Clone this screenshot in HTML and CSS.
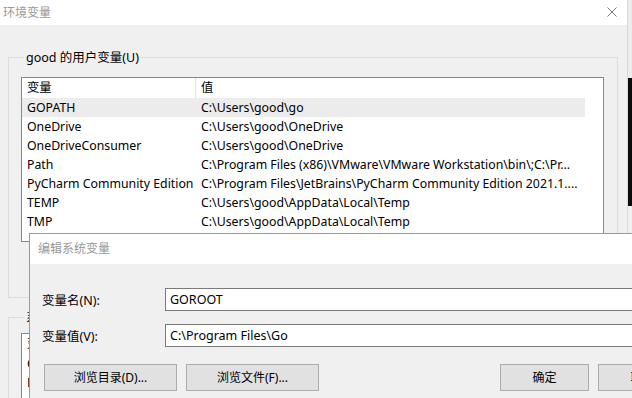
FILE: index.html
```html
<!DOCTYPE html>
<html>
<head>
    <meta charset="utf-8"/>
    <link rel="stylesheet" href="styles.css">
</head>
<body>
<div class="screen">
    <div class="window">
        <div class="titlebar">
            <span class="title">环境变量</span>
            <svg class="close" width="10" height="10" viewBox="0 0 10 10">
                <path d="M0.5 0.5 L9.5 9.5 M9.5 0.5 L0.5 9.5" stroke="#777" stroke-width="1" fill="none"/>
            </svg>
        </div>
        <div class="content">
            <fieldset class="group user">
                <legend>good 的用户变量(U)</legend>
                <div class="list">
                    <div class="list-head">
                        <span class="col name">变量</span>
                        <span class="col value">值</span>
                    </div>
                    <div class="row selected"><span class="col name">GOPATH</span><span class="col value">C:\Users\good\go</span></div>
                    <div class="row"><span class="col name">OneDrive</span><span class="col value">C:\Users\good\OneDrive</span></div>
                    <div class="row"><span class="col name">OneDriveConsumer</span><span class="col value">C:\Users\good\OneDrive</span></div>
                    <div class="row"><span class="col name">Path</span><span class="col value">C:\Program Files (x86)\VMware\VMware Workstation\bin\;C:\Pr...</span></div>
                    <div class="row"><span class="col name">PyCharm Community Edition</span><span class="col value">C:\Program Files\JetBrains\PyCharm Community Edition 2021.1....</span></div>
                    <div class="row"><span class="col name">TEMP</span><span class="col value">C:\Users\good\AppData\Local\Temp</span></div>
                    <div class="row"><span class="col name">TMP</span><span class="col value">C:\Users\good\AppData\Local\Temp</span></div>
                </div>
            </fieldset>
            <fieldset class="group system">
                <legend>系统变量(S)</legend>
                <div class="list">
                    <div class="list-head">
                        <span class="col name">变量</span>
                    </div>
                    <div class="row"><span class="col name">ComSpec</span></div>
                    <div class="row"><span class="col name">DriverData</span></div>
                </div>
            </fieldset>
        </div>
    </div>
    <div class="desk">
        <div class="desk-top"></div>
        <div class="desk-term"></div>
    </div>

    <div class="dialog">
        <div class="dialog-title">编辑系统变量</div>
        <div class="dialog-body">
            <div class="field">
                <label>变量名(N):</label>
                <div class="input">GOROOT</div>
            </div>
            <div class="field">
                <label>变量值(V):</label>
                <div class="input">C:\Program Files\Go</div>
            </div>
            <div class="buttons">
                <div class="btn wide">浏览目录(D)...</div>
                <div class="btn wide">浏览文件(F)...</div>
                <div class="spacer"></div>
                <div class="btn">确定</div>
                <div class="btn">取消</div>
            </div>
        </div>
    </div>
</div>
</body>
</html>
```

FILE: styles.css
```css
body {
    margin: 0;
    font-family: 'Noto Sans', 'Noto Sans CJK SC', sans-serif;
    font-size: 12.3px;
    color: #000;
}

.screen {
    position: relative;
    width: 632px;
    height: 398px;
    overflow: hidden;
    display: flex;
    background: #f0f0f0;
}

.window {
    width: 628px;
    height: 398px;
    background: #f0f0f0;
    border-right: 1px solid #d8d8d8;
    box-sizing: border-box;
}

.titlebar {
    height: 25px;
    background: #fff;
    display: flex;
    align-items: center;
    justify-content: space-between;
    padding: 0 10px 2px 3px;
    box-sizing: border-box;
}

.titlebar .title {
    color: #999;
    font-size: 12px;
}

.content {
    padding: 24px 0 0 8px;
}

.group {
    margin: 0;
    padding: 0 0 0 12px;
    width: 610px;
    box-sizing: border-box;
    border: 1px solid #dcdcdc;
}

.group legend {
    padding: 0 2px;
    margin-left: 3px;
    line-height: 17px;
    font-size: 12.5px;
}

.group.user {
    height: 249px;
}

.group.system {
    margin-top: 11px;
    height: 120px;
}

.list {
    margin-top: 11px;
    width: 583px;
    height: 165px;
    background: #fff;
    border: 1px solid #828790;
    box-sizing: border-box;
    overflow: hidden;
}

.group.system .list {
    margin-top: 7px;
    height: 80px;
}

.list-head,
.row {
    display: flex;
    width: 563px;
    white-space: nowrap;
}

.list-head {
    height: 20px;
    line-height: 20px;
}

.list-head .name {
    border-right: 1px solid #e5e5e5;
}

.row {
    height: 19px;
    line-height: 19px;
}

.row.selected {
    background: #ececec;
}

.col {
    padding-left: 5px;
    box-sizing: border-box;
    overflow: hidden;
}

.col.name {
    width: 174px;
}

.col.value {
    flex: 1;
}

.desk {
    width: 4px;
    display: flex;
    flex-direction: column;
}

.desk-top {
    height: 78px;
    background: #ececec;
}

.desk-term {
    height: 128px;
    background: #0c0c0c;
}

.dialog {
    position: absolute;
    left: 29px;
    top: 233px;
    width: 640px;
    height: 180px;
    background: #f0f0f0;
    border: 1px solid #9a9a9a;
    box-sizing: border-box;
}

.dialog-title {
    height: 30px;
    line-height: 29px;
    background: #fff;
    padding-left: 8px;
    color: #999;
    font-size: 12px;
}

.dialog-body {
    padding: 24px 0 0 12px;
}

.field {
    display: flex;
    align-items: center;
    height: 23px;
    margin-bottom: 13px;
}

.field label {
    width: 123px;
    font-size: 12.5px;
}

.input {
    width: 480px;
    height: 23px;
    line-height: 21px;
    padding-left: 4px;
    background: #fff;
    border: 1px solid #7a7a7a;
    box-sizing: border-box;
    font-size: 12.5px;
}

.buttons {
    display: flex;
    gap: 9px;
    margin-top: 17px;
    padding-left: 2px;
}

.btn {
    width: 89px;
    height: 27px;
    line-height: 25px;
    text-align: center;
    background: #e1e1e1;
    border: 1px solid #adadad;
    box-sizing: border-box;
    flex-shrink: 0;
    font-size: 12px;
}

.btn.wide {
    width: 133px;
}

.spacer {
    width: 163px;
    flex-shrink: 0;
}
```
